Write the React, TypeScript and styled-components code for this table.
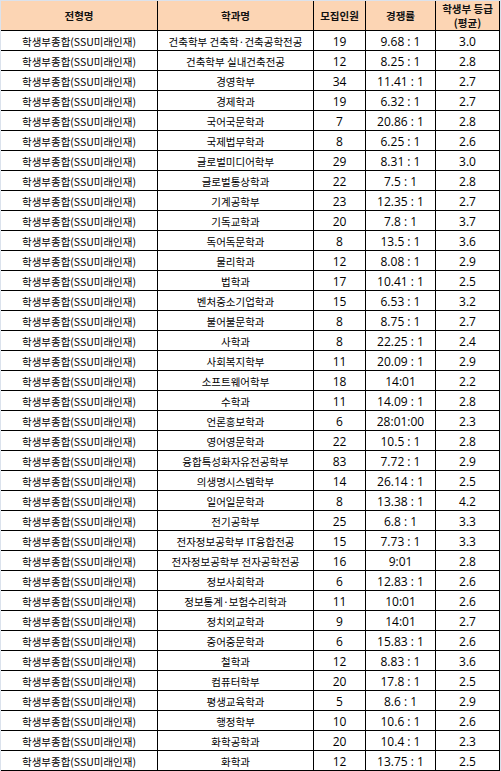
import React from "react";
import styled, { createGlobalStyle } from "styled-components";

const Global = createGlobalStyle`
  html, body { margin: 0; padding: 0; background: #dbe2ec; }
  body { padding: 1px 0 0 1px; }
`;

const rows: [string, number, string, string][] = [
  ["건축학부 건축학·건축공학전공", 19, "9.68 : 1", "3.0"],
  ["건축학부 실내건축전공", 12, "8.25 : 1", "2.8"],
  ["경영학부", 34, "11.41 : 1", "2.7"],
  ["경제학과", 19, "6.32 : 1", "2.7"],
  ["국어국문학과", 7, "20.86 : 1", "2.8"],
  ["국제법무학과", 8, "6.25 : 1", "2.6"],
  ["글로벌미디어학부", 29, "8.31 : 1", "3.0"],
  ["글로벌통상학과", 22, "7.5 : 1", "2.8"],
  ["기계공학부", 23, "12.35 : 1", "2.7"],
  ["기독교학과", 20, "7.8 : 1", "3.7"],
  ["독어독문학과", 8, "13.5 : 1", "3.6"],
  ["물리학과", 12, "8.08 : 1", "2.9"],
  ["법학과", 17, "10.41 : 1", "2.5"],
  ["벤처중소기업학과", 15, "6.53 : 1", "3.2"],
  ["불어불문학과", 8, "8.75 : 1", "2.7"],
  ["사학과", 8, "22.25 : 1", "2.4"],
  ["사회복지학부", 11, "20.09 : 1", "2.9"],
  ["소프트웨어학부", 18, "14:01", "2.2"],
  ["수학과", 11, "14.09 : 1", "2.8"],
  ["언론홍보학과", 6, "28:01:00", "2.3"],
  ["영어영문학과", 22, "10.5 : 1", "2.8"],
  ["융합특성화자유전공학부", 83, "7.72 : 1", "2.9"],
  ["의생명시스템학부", 14, "26.14 : 1", "2.5"],
  ["일어일문학과", 8, "13.38 : 1", "4.2"],
  ["전기공학부", 25, "6.8 : 1", "3.3"],
  ["전자정보공학부 IT융합전공", 15, "7.73 : 1", "3.3"],
  ["전자정보공학부 전자공학전공", 16, "9:01", "2.8"],
  ["정보사회학과", 6, "12.83 : 1", "2.6"],
  ["정보통계·보험수리학과", 11, "10:01", "2.6"],
  ["정치외교학과", 9, "14:01", "2.7"],
  ["중어중문학과", 6, "15.83 : 1", "2.6"],
  ["철학과", 12, "8.83 : 1", "3.6"],
  ["컴퓨터학부", 20, "17.8 : 1", "2.5"],
  ["평생교육학과", 5, "8.6 : 1", "2.9"],
  ["행정학부", 10, "10.6 : 1", "2.6"],
  ["화학공학과", 20, "10.4 : 1", "2.3"],
  ["화학과", 12, "13.75 : 1", "2.5"],
];

const Table = styled.div`
  display: grid;
  grid-template-columns: 157px 156px 52px 70px 64px;
  grid-template-rows: 30px;
  grid-auto-rows: 20px;
  width: 499px;
  background: #ffffff;
`;

const HeadCell = styled.div`
  box-sizing: border-box;
  background: #fcd5b4;
  border-right: 1px solid #000;
  border-bottom: 1px solid #000;
  display: flex;
  flex-direction: column;
  align-items: center;
  justify-content: center;
  font-family: "Noto Sans CJK KR", sans-serif;
  font-weight: 700;
  font-size: 10.5px;
  line-height: 14px;
  color: #111;
  text-align: center;
  overflow: hidden;
`;

const HeadLine = styled.span`
  display: block;
  height: 14px;
  line-height: 14px;
  overflow: hidden;
`;

const Cell = styled.div<{ $num?: boolean }>`
  box-sizing: border-box;
  border-right: 1px solid #000;
  border-bottom: 1px solid #000;
  display: flex;
  align-items: center;
  justify-content: center;
  white-space: nowrap;
  overflow: hidden;
  color: #000;
  font-family: ${(p) =>
    p.$num ? '"Open Sans", "Noto Sans CJK KR", sans-serif' : '"Noto Sans CJK KR", sans-serif'};
  font-size: ${(p) => (p.$num ? "12px" : "10.5px")};
  padding-top: 1px;
`;

export default function App() {
  return (
    <>
      <Global />
      <Table>
        <HeadCell>전형명</HeadCell>
        <HeadCell>학과명</HeadCell>
        <HeadCell>모집인원</HeadCell>
        <HeadCell>경쟁률</HeadCell>
        <HeadCell>
          <HeadLine>학생부 등급</HeadLine>
          <HeadLine>(평균)</HeadLine>
        </HeadCell>
        {rows.map(([dept, n, ratio, grade]) => (
          <React.Fragment key={dept}>
            <Cell>학생부종합(SSU미래인재)</Cell>
            <Cell>{dept}</Cell>
            <Cell $num>{n}</Cell>
            <Cell $num>{ratio}</Cell>
            <Cell $num>{grade}</Cell>
          </React.Fragment>
        ))}
      </Table>
    </>
  );
}
